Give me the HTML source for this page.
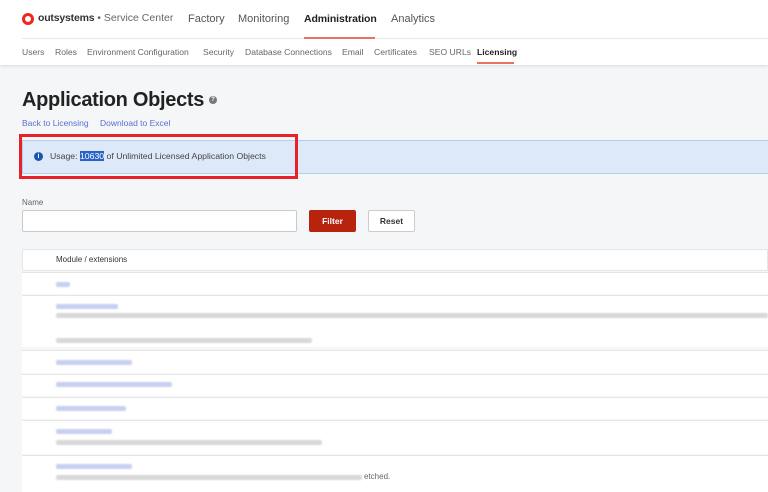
<!DOCTYPE html>
<html><head><style>
*{margin:0;padding:0;box-sizing:border-box}
body{width:768px;height:492px;overflow:hidden;background:#f5f6f8;font-family:"Liberation Sans",sans-serif;position:relative;color:#333}
.a{position:absolute;white-space:nowrap}
.hdr{position:absolute;left:0;top:0;width:768px;height:65px;background:#fff;box-shadow:0 1px 3px rgba(0,0,0,.12)}
.top{font-size:11px;color:#555;top:13px}
.sub{font-size:8.6px;color:#666;top:47px}
.blur{position:absolute;height:5px;border-radius:2px;filter:blur(.8px)}
.l{background:#c8d0f0}.g{background:#d8d8d8}
.row{position:absolute;left:22px;width:746px;background:#fff;border-top:1px solid #e6e6e6}
</style></head><body>
<div class="hdr"></div>
<div class="a" style="left:22px;top:13px;width:12px;height:12px;border-radius:50%;border:3.5px solid #f0261b;background:#fff"></div>
<div class="a" style="left:38px;top:12px;font-size:10.5px;color:#333"><span style="font-weight:bold;letter-spacing:-.2px">outsystems</span> <span style="color:#666">• Service Center</span></div>
<div class="a top" style="left:188px">Factory</div>
<div class="a top" style="left:238px">Monitoring</div>
<div class="a top" style="left:304px;color:#222;font-weight:bold;font-size:10.5px;letter-spacing:-.1px">Administration</div>
<div class="a top" style="left:391px">Analytics</div>
<div class="a" style="left:22px;top:38px;width:746px;height:1px;background:#e8e8e8"></div>
<div class="a" style="left:304px;top:37px;width:71px;height:2px;background:#e8715f"></div>
<div class="a sub" style="left:22px">Users</div>
<div class="a sub" style="left:55px">Roles</div>
<div class="a sub" style="left:87px">Environment Configuration</div>
<div class="a sub" style="left:203px">Security</div>
<div class="a sub" style="left:245px">Database Connections</div>
<div class="a sub" style="left:342px">Email</div>
<div class="a sub" style="left:374px">Certificates</div>
<div class="a sub" style="left:429px">SEO URLs</div>
<div class="a sub" style="left:477px;color:#222;font-weight:bold">Licensing</div>
<div class="a" style="left:477px;top:62px;width:37px;height:2px;background:#e8715f"></div>

<div class="a" style="left:22px;top:89px;font-size:20px;color:#222;font-weight:bold;letter-spacing:-.3px">Application Objects</div>
<div class="a" style="left:209px;top:96px;width:8px;height:8px;border-radius:50%;background:#777;color:#fff;font-size:6px;text-align:center;line-height:8px;font-weight:bold">?</div>
<div class="a" style="left:22px;top:118px;font-size:8.5px;color:#5a6fd0">Back to Licensing</div>
<div class="a" style="left:100px;top:118px;font-size:8.5px;color:#5a6fd0">Download to Excel</div>

<div class="a" style="left:22px;top:140px;width:746px;height:34px;background:#dde9f8;border:1px solid #b7cdee;border-right:none"></div>
<div class="a" style="left:19px;top:134px;width:279px;height:45px;border:3px solid #e8202a"></div>
<div class="a" style="left:34px;top:152px;width:9px;height:9px;border-radius:50%;background:#1a55b0;color:#fff;font-size:7px;line-height:9px;text-align:center;font-weight:bold">i</div>
<div class="a" style="left:50px;top:151px;font-size:8.7px;color:#444">Usage: <span style="background:#2a63c8;color:#fff">10630</span> of Unlimited Licensed Application Objects</div>

<div class="a" style="left:22px;top:198px;font-size:8px;color:#666">Name</div>
<div class="a" style="left:22px;top:210px;width:275px;height:22px;background:#fff;border:1px solid #c9c9c9;border-radius:2px"></div>
<div class="a" style="left:309px;top:210px;width:47px;height:22px;background:#b8230d;border-radius:2px;color:#fff;font-size:8.5px;font-weight:bold;text-align:center;line-height:22px">Filter</div>
<div class="a" style="left:368px;top:210px;width:47px;height:22px;background:#fff;border:1px solid #ccc;border-radius:2px;color:#333;font-size:8.5px;font-weight:bold;text-align:center;line-height:20px">Reset</div>

<div class="row" style="top:249px;height:22px;border:1px solid #e6e6e6"></div>
<div class="a" style="left:56px;top:255px;font-size:8px;color:#333">Module / extensions</div>
<div class="row" style="top:272px;height:22px"></div>
<div class="blur l" style="left:56px;top:282px;width:14px"></div>
<div class="row" style="top:295px;height:52px"></div>
<div class="blur l" style="left:56px;top:304px;width:62px"></div>
<div class="blur g" style="left:56px;top:313px;width:712px"></div>
<div class="blur g" style="left:56px;top:338px;width:256px"></div>
<div class="row" style="top:350px;height:23px"></div>
<div class="blur l" style="left:56px;top:360px;width:76px"></div>
<div class="row" style="top:374px;height:22px"></div>
<div class="blur l" style="left:56px;top:382px;width:116px"></div>
<div class="row" style="top:397px;height:22px"></div>
<div class="blur l" style="left:56px;top:406px;width:70px"></div>
<div class="row" style="top:420px;height:34px"></div>
<div class="blur l" style="left:56px;top:429px;width:56px"></div>
<div class="blur g" style="left:56px;top:440px;width:266px"></div>
<div class="row" style="top:455px;height:37px"></div>
<div class="blur l" style="left:56px;top:464px;width:76px"></div>
<div class="blur g" style="left:56px;top:475px;width:306px"></div>
<div class="a" style="left:364px;top:472px;font-size:8px;color:#666">etched.</div>
</body></html>
